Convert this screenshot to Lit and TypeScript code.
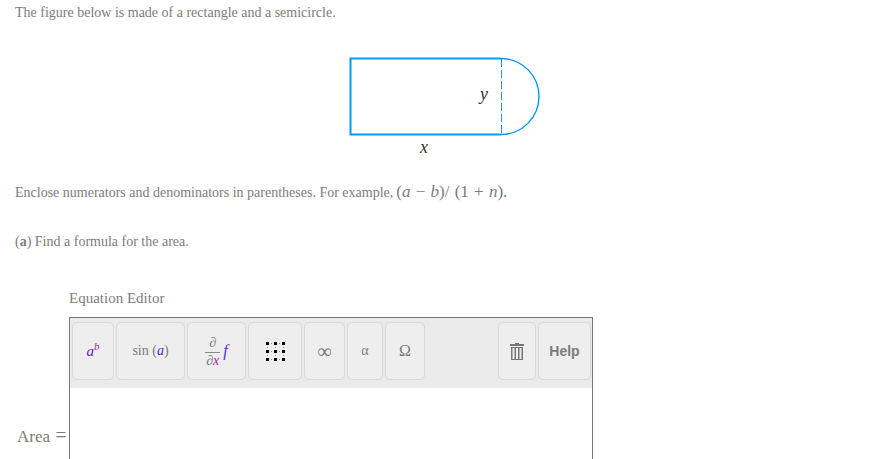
import { LitElement, html, css } from 'lit';
import { customElement } from 'lit/decorators.js';

@customElement('app-root')
export class AppRoot extends LitElement {
  static styles = css`
    :host {
      display: block;
      height: 459px;
      overflow: hidden;
      background: #fff;
      color: #7c7c7c;
      font-family: 'Liberation Serif', serif;
      font-size: 14px;
    }
    p {
      margin: 0;
      padding-left: 15px;
      line-height: 16px;
    }
    .intro {
      padding-top: 5px;
    }
    .figure {
      display: flex;
      justify-content: center;
      padding: 36px 0 0 11px;
      height: 122px;
    }
    .figure text {
      font-family: 'Liberation Serif', serif;
      font-style: italic;
      font-size: 18px;
      fill: #333;
    }
    .hint {
      display: flex;
      align-items: baseline;
      height: 20px;
      margin-top: 5px;
    }
    .math {
      font-size: 17px;
      margin-left: 3px;
      word-spacing: 1px;
    }
    .part {
      margin-top: 30px;
    }
    .title {
      padding-left: 69px;
      margin-top: 39px;
      font-size: 15px;
      line-height: 18px;
    }
    .row {
      display: flex;
      margin-top: 10px;
    }
    .label {
      width: 69px;
      flex: none;
      box-sizing: border-box;
      padding: 108px 0 0 17px;
      font-size: 17px;
      line-height: 20px;
      white-space: nowrap;
    }
    .eq {
      font-size: 20px;
      margin-left: 1px;
    }
    .editor {
      width: 524px;
      height: 200px;
      box-sizing: border-box;
      border: 1px solid #777;
    }
    .toolbar {
      display: flex;
      gap: 2px;
      height: 70px;
      box-sizing: border-box;
      padding: 4px 1px 0 2px;
      background: #ebebeb;
    }
    .btn {
      height: 58px;
      box-sizing: border-box;
      display: flex;
      align-items: center;
      justify-content: center;
      border: 1px solid #d9d9d9;
      border-radius: 5px;
      background: #eee;
      white-space: nowrap;
    }
    .push {
      margin-left: auto;
    }
    .v {
      color: #5a1fe0;
      font-style: italic;
    }
    .m {
      color: #b020a8;
      font-style: italic;
    }
    .power {
      font-size: 15px;
    }
    sup {
      font-size: 11px;
      line-height: 0;
    }
    .frac {
      display: flex;
      flex-direction: column;
      align-items: center;
      margin-right: 3px;
    }
    .num {
      border-bottom: 1px solid #888;
      width: 15px;
      text-align: center;
      line-height: 18px;
    }
    .den {
      line-height: 15px;
    }
    .fn {
      font-size: 16px;
    }
    .sym {
      font-size: 16px;
    }
    .inf {
      font-size: 20px;
    }
    .help {
      font-family: 'Liberation Sans', sans-serif;
      font-weight: bold;
      font-size: 14px;
    }
  `;

  render() {
    return html`
      <p class="intro">The figure below is made of a rectangle and a semicircle.</p>
      <div class="figure">
        <svg width="200" height="105" viewBox="0 0 200 105">
          <path d="M152 1.500H1.500V77.500H152" fill="none" stroke="#0099ff" stroke-width="2" />
          <path d="M152 1.500A38 38 0 0 1 152 77.500" fill="none" stroke="#0099ff" stroke-width="1.400" />
          <path d="M152.500 2V77" stroke="#2d8fe0" stroke-width="1" stroke-dasharray="8 3" />
          <text x="131" y="43">y</text>
          <text x="71" y="96">x</text>
        </svg>
      </div>
      <p class="hint">
        <span>Enclose numerators and denominators in parentheses. For example,</span>
        <span class="math">(<i>a</i> − <i>b</i>)/ (1 + <i>n</i>).</span>
      </p>
      <p class="part">(<b>a</b>) Find a formula for the area.</p>
      <div class="title">Equation Editor</div>
      <div class="row">
        <div class="label">Area <span class="eq">=</span></div>
        <div class="editor">
          <div class="toolbar">
            <div class="btn power" style="width:42px"><span><span class="v">a</span><sup class="m">b</sup></span></div>
            <div class="btn" style="width:69px"><span>sin (<span class="v">a</span>)</span></div>
            <div class="btn" style="width:59px">
              <div class="frac"><span class="num">∂</span><span class="den">∂<span class="m">x</span></span></div>
              <span class="v fn">f</span>
            </div>
            <div class="btn" style="width:54px">
              <svg width="19" height="19" viewBox="0 0 19 19">
                <path
                  d="M0 0h3v3H0zM8 0h3v3H8zM16 0h3v3h-3zM0 8h3v3H0zM8 8h3v3H8zM16 8h3v3h-3zM0 16h3v3H0zM8 16h3v3H8zM16 16h3v3h-3z"
                  fill="#000"
                />
                <path
                  d="M5 1h1v1H5zM13 1h1v1h-1zM5 9h1v1H5zM13 9h1v1h-1zM5 17h1v1H5zM13 17h1v1h-1zM1 5h1v1H1zM9 5h1v1H9zM17 5h1v1h-1zM1 13h1v1H1zM9 13h1v1H9zM17 13h1v1h-1z"
                  fill="#888"
                />
              </svg>
            </div>
            <div class="btn inf" style="width:41px">∞</div>
            <div class="btn" style="width:36px">α</div>
            <div class="btn sym" style="width:40px">Ω</div>
            <div class="btn push" style="width:38px">
              <svg width="14" height="17" viewBox="0 0 14 17">
                <path d="M5 0h4v1h5v2H0V1h5z" fill="#777" />
                <path d="M1 4h12v13H1z" fill="#777" />
                <path d="M3.500 5v11M7 5v11M10.500 5v11" stroke="#eee" stroke-width="2" />
              </svg>
            </div>
            <div class="btn help" style="width:53px">Help</div>
          </div>
        </div>
      </div>
    `;
  }
}
